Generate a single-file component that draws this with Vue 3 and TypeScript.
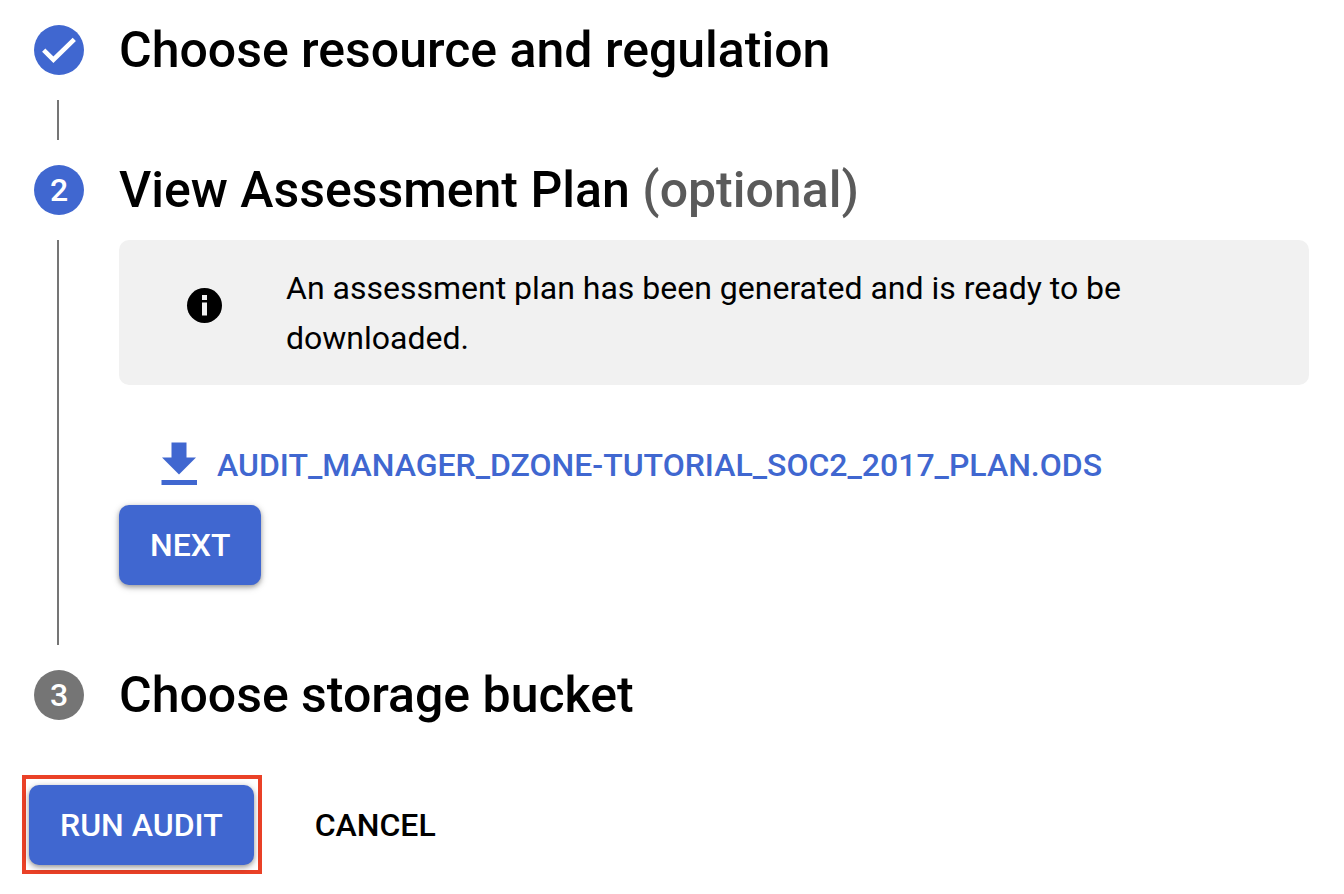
<script setup lang="ts">
import { ref } from 'vue'

interface Step {
  title: string
  hint?: string
  state: 'done' | 'active' | 'pending'
}

const steps = ref<Step[]>([
  { title: 'Choose resource and regulation', state: 'done' },
  { title: 'View Assessment Plan', hint: '(optional)', state: 'active' },
  { title: 'Choose storage bucket', state: 'pending' },
])

const planFile = 'AUDIT_MANAGER_DZONE-TUTORIAL_SOC2_2017_PLAN.ODS'

function next(): void {
  steps.value[1].state = 'done'
  steps.value[2].state = 'active'
}
</script>

<template>
  <main class="page">
    <ol class="stepper">
      <li v-for="(step, index) in steps" :key="step.title" class="step">
        <span class="badge" :class="step.state">
          <svg v-if="step.state === 'done'" class="check" viewBox="0 0 50 50" role="img" aria-label="Completed">
            <path d="M9.7 25.200 L19.400 34.700 L40.300 14.300" fill="none" stroke="#fff" stroke-width="4.600" />
          </svg>
          <template v-else>{{ index + 1 }}</template>
        </span>
        <h2 class="title">
          {{ step.title }} <span v-if="step.hint" class="hint">{{ step.hint }}</span>
        </h2>
        <span v-if="index < steps.length - 1" class="connector"></span>
        <div v-if="index === 1" class="body">
          <div class="note">
            <svg class="info" viewBox="0 0 36 36" aria-hidden="true">
              <circle cx="18.500" cy="18.500" r="17.500" />
              <path d="M16 8h5v5h-5zM16 15.500h5v13h-5z" fill="#f1f1f1" />
            </svg>
            <p class="note-text">An assessment plan has been generated and is ready to be downloaded.</p>
          </div>
          <a class="file" href="#plan">
            <svg class="download" viewBox="0 0 36 46" aria-hidden="true">
              <path d="M10.500 0.500h15v15h9.500L18 32.500 1 15.500h9.500zM0.500 38h35.500v5H0.500z" fill="currentColor" />
            </svg>
            {{ planFile }}
          </a>
          <button class="button primary" type="button" @click="next">NEXT</button>
        </div>
      </li>
    </ol>
    <div class="actions">
      <div class="highlight">
        <button class="button primary" type="button">RUN AUDIT</button>
      </div>
      <button class="button plain" type="button">CANCEL</button>
    </div>
  </main>
</template>

<style>
body {
  margin: 0;
  background: #fff;
}
</style>

<style scoped>
.page {
  box-sizing: border-box;
  padding: 25px 35px 20px 34px;
  font-family: Roboto, "Liberation Sans", sans-serif;
  font-size: 32px;
  color: #000;
}

.stepper {
  display: flex;
  flex-direction: column;
  gap: 25px;
  margin: 0;
  padding: 0;
  list-style: none;
}

.step {
  display: grid;
  grid-template-columns: 50px minmax(0, 1fr);
  column-gap: 35px;
  row-gap: 25px;
}

.badge {
  display: flex;
  align-items: center;
  justify-content: center;
  height: 50px;
  border-radius: 50%;
  background: #4067d0;
  color: #fff;
  font-weight: 500;
  line-height: 50px;
}

.badge.pending {
  background: #757575;
}

.check {
  width: 50px;
  height: 50px;
}

.title {
  margin: 0;
  font-size: 50px;
  font-weight: 500;
  line-height: 50px;
}

.hint {
  color: #5a5a5a;
}

.connector {
  width: 2px;
  min-height: 40px;
  margin-left: 23px;
  background: #757575;
}

.body {
  display: flex;
  flex-direction: column;
  align-items: flex-start;
  padding-bottom: 60px;
}

.note {
  box-sizing: border-box;
  display: flex;
  align-items: flex-start;
  gap: 64px;
  width: 100%;
  padding: 23px 160px 22px 67px;
  border-radius: 10px;
  background: #f1f1f1;
}

.info {
  flex: none;
  width: 36px;
  height: 36px;
  margin-top: 24px;
}

.note-text {
  margin: 0;
  line-height: 50px;
}

.file {
  display: flex;
  align-items: center;
  gap: 20px;
  margin-top: 40px;
  padding-left: 42px;
  color: #4067d0;
  font-weight: 500;
  line-height: 80px;
  text-decoration: none;
}

.download {
  width: 36px;
  height: 46px;
}

.button {
  padding: 0 31px;
  border: 0;
  border-radius: 10px;
  font: inherit;
  font-weight: 500;
  line-height: 80px;
  cursor: pointer;
}

.primary {
  background: #4067d0;
  color: #fff;
  box-shadow: 0 2px 5px rgba(0, 0, 0, 0.35), 0 2px 10px rgba(0, 0, 0, 0.12);
}

.plain {
  background: transparent;
  color: #000;
}

.actions {
  display: flex;
  align-items: center;
  gap: 22px;
  margin: 55px 0 0 -12px;
}

.highlight {
  padding: 6px 4px 5px 3px;
  border: 4px solid #ea4127;
}
</style>
